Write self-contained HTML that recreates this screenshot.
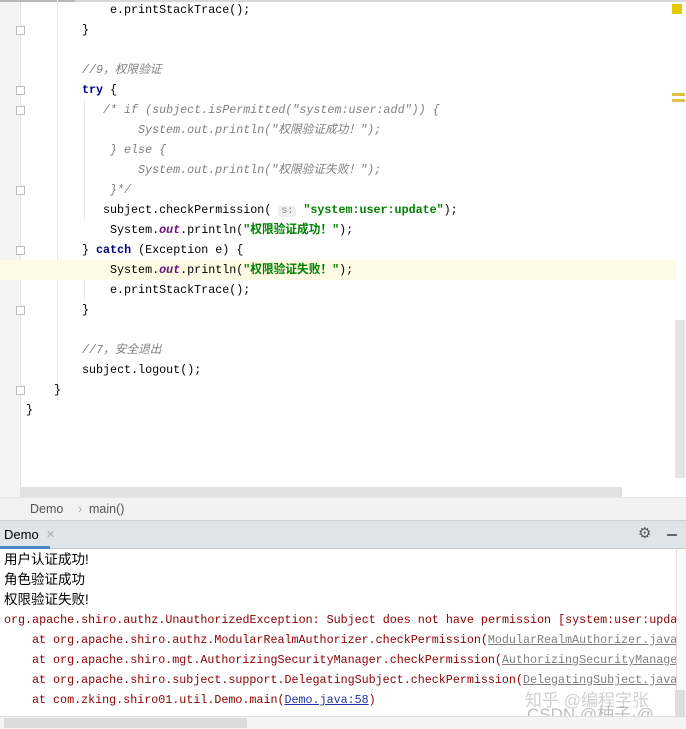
<!DOCTYPE html>
<html><head><meta charset="utf-8"><style>
*{margin:0;padding:0;box-sizing:border-box}
body{width:686px;height:729px;overflow:hidden;background:#fff;position:relative;font-family:"Liberation Mono","Noto Sans CJK SC",monospace;font-size:11.7px;color:#000}
.l{position:absolute;height:20px;line-height:20px;white-space:pre}
.k{color:#000080;font-weight:bold}
.c{color:#808080;font-style:italic}
.s{color:#008000;font-weight:bold}
.o{color:#660e7a;font-style:italic;font-weight:bold}
.g{position:absolute;width:1px;background:#e6e6e6}
.f{position:absolute;left:16px;width:9px;height:9px;border:1px solid #bbb;background:#fff}
.con{position:absolute;left:4px;height:20px;line-height:20px;white-space:pre;color:#8b0000}
.cn{color:#000;font-family:'Liberation Sans','Noto Sans CJK SC',sans-serif;font-size:13.5px}
.u{color:#808080;text-decoration:underline}
</style></head><body>
<div style="position:absolute;left:0;top:0;width:21px;height:497px;background:#f4f4f4;border-right:1px solid #e2e2e2"></div>
<div style="position:absolute;left:0;top:0;width:686px;height:2px;background:#d8d8d8"></div>
<div style="position:absolute;left:0;top:0;width:75px;height:2px;background:#b8b8b8"></div>
<div class="g" style="left:57px;top:0;height:400px"></div>
<div class="g" style="left:84px;top:100px;height:120px"></div>
<div class="g" style="left:84px;top:260px;height:40px"></div>
<div style="position:absolute;left:0;top:260px;width:676px;height:20px;background:#fffae3"></div>
<div class="f" style="top:26px"></div><div class="f" style="top:86px"></div><div class="f" style="top:106px"></div><div class="f" style="top:186px"></div><div class="f" style="top:246px"></div><div class="f" style="top:306px"></div><div class="f" style="top:386px"></div>
<div class="l" style="left:110px;top:0">e.printStackTrace();</div>
<div class="l" style="left:82px;top:20px">}</div>
<div class="l c" style="left:82px;top:60px">//9，权限验证</div>
<div class="l" style="left:82px;top:80px"><span class="k">try</span> {</div>
<div class="l c" style="left:103px;top:100px">/* if (subject.isPermitted("system:user:add")) {</div>
<div class="l c" style="left:138px;top:120px">System.out.println("权限验证成功！");</div>
<div class="l c" style="left:110px;top:140px">} else {</div>
<div class="l c" style="left:138px;top:160px">System.out.println("权限验证失败！");</div>
<div class="l c" style="left:110px;top:180px">}*/</div>
<div class="l" style="left:103px;top:200px">subject.checkPermission( <span style="background:#eee;color:#888;font-size:10px;padding:0 3px;border-radius:3px">s:</span> <span class="s">"system:user:update"</span>);</div>
<div class="l" style="left:110px;top:220px">System.<span class="o">out</span>.println(<span class="s">"权限验证成功！"</span>);</div>
<div class="l" style="left:82px;top:240px">} <span class="k">catch</span> (Exception e) {</div>
<div class="l" style="left:110px;top:260px">System.<span class="o">out</span>.println(<span class="s">"权限验证失败！"</span>);</div>
<div class="l" style="left:110px;top:280px">e.printStackTrace();</div>
<div class="l" style="left:82px;top:300px">}</div>
<div class="l c" style="left:82px;top:340px">//7，安全退出</div>
<div class="l" style="left:82px;top:360px">subject.logout();</div>
<div class="l" style="left:54px;top:380px">}</div>
<div class="l" style="left:26px;top:400px">}</div>
<div style="position:absolute;left:672px;top:4px;width:10px;height:10px;background:#e8c800"></div>
<div style="position:absolute;left:672px;top:93px;width:13px;height:3px;background:#e0c040"></div>
<div style="position:absolute;left:672px;top:99px;width:13px;height:3px;background:#e0c040"></div>
<div style="position:absolute;left:675px;top:320px;width:10px;height:158px;background:#e2e2e2"></div>
<div style="position:absolute;left:20px;top:487px;width:602px;height:10px;background:#e2e2e2"></div>
<div style="position:absolute;left:0;top:497px;width:686px;height:24px;background:#f2f2f2;border-top:1px solid #e6e6e6;border-bottom:1px solid #cfcfcf;font-family:'Liberation Sans',sans-serif;font-size:12.5px;line-height:23px;color:#555"><span style="position:absolute;left:30px">Demo</span><span style="position:absolute;left:78px;color:#aaa">›</span><span style="position:absolute;left:89px">main()</span></div>
<div style="position:absolute;left:0;top:521px;width:686px;height:28px;background:#dfe3ea;border-bottom:1px solid #c9c9c9;font-family:'Liberation Sans',sans-serif;font-size:13px;line-height:28px"><span style="position:absolute;left:4px">Demo</span><span style="position:absolute;left:46px;color:#aaa;font-size:11px">✕</span><div style="position:absolute;left:0;bottom:-1px;width:50px;height:3px;background:#4a88c7"></div><span style="position:absolute;left:638px;top:-1px;color:#555;font-size:15px">⚙</span><div style="position:absolute;left:667px;top:13px;width:10px;height:2px;background:#666"></div></div>
<div class="con cn" style="top:550px">用户认证成功!</div>
<div class="con cn" style="top:570px">角色验证成功</div>
<div class="con cn" style="top:590px">权限验证失败!</div>
<div class="con" style="top:610px;left:4px">org.apache.shiro.authz.UnauthorizedException: Subject does not have permission [system:user:update]</div>
<div class="con" style="top:630px;left:32px">at org.apache.shiro.authz.ModularRealmAuthorizer.checkPermission(<span class="u">ModularRealmAuthorizer.java:3</span></div>
<div class="con" style="top:650px;left:32px">at org.apache.shiro.mgt.AuthorizingSecurityManager.checkPermission(<span class="u">AuthorizingSecurityManager.j</span></div>
<div class="con" style="top:670px;left:32px">at org.apache.shiro.subject.support.DelegatingSubject.checkPermission(<span class="u">DelegatingSubject.java:3</span></div>
<div class="con" style="top:690px;left:32px">at com.zking.shiro01.util.Demo.main(<span style="color:#2233aa;text-decoration:underline">Demo.java:58</span>)</div>
<div style="position:absolute;left:676px;top:549px;width:10px;height:180px;border-left:1px solid #ddd;background:#fafafa"></div>
<div style="position:absolute;left:675px;top:690px;width:10px;height:32px;background:#ddd"></div>
<div style="position:absolute;left:525px;top:686px;font-family:'Liberation Sans','Noto Sans CJK SC',sans-serif;font-size:17px;color:rgba(120,120,120,.35);white-space:nowrap">知乎 @编程字张</div>
<div style="position:absolute;left:527px;top:700px;font-family:'Liberation Sans','Noto Sans CJK SC',sans-serif;font-size:17px;color:rgba(110,110,110,.45);white-space:nowrap">CSDN @柚子·@</div>
<div style="position:absolute;left:0;top:716px;width:686px;height:13px;background:#f4f4f4;border-top:1px solid #ddd"></div>
<div style="position:absolute;left:4px;top:718px;width:243px;height:10px;background:#dcdcdc"></div>
</body></html>
